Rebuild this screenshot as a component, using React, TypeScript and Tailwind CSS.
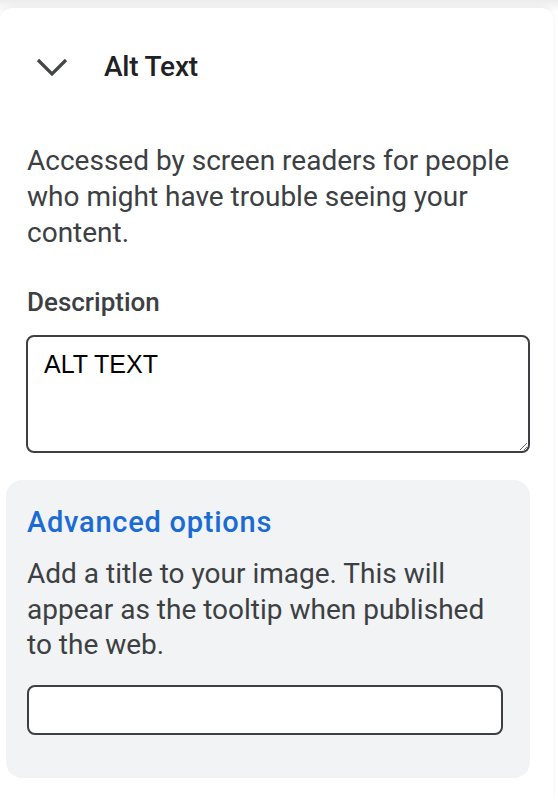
import React from 'react';

const Chevron: React.FC = () => (
  <svg width="32" height="18" viewBox="0 0 32 18" fill="none">
    <path d="M2 2 L16 16 L30 2" stroke="#444746" strokeWidth="3.2" strokeLinejoin="miter" />
  </svg>
);

const App: React.FC = () => {
  return (
    <div className="w-[558px] h-[800px] overflow-hidden bg-gradient-to-b from-[#ececec] to-white to-[12px] pt-2 font-['Roboto',sans-serif]">
      <div className="h-full mr-[5px] rounded-t-xl bg-white shadow-[0_-1px_6px_rgba(0,0,0,0.06)] pt-[41px]">
        {/* Header */}
        <div className="flex items-center h-[36px] pl-[36px]">
          <Chevron />
          <span className="ml-[36px] text-[28px] font-medium text-[#202124] tracking-[-0.2px]">Alt Text</span>
        </div>

        {/* Help text */}
        <p className="mt-[58px] px-[27px] text-[28px] leading-[36px] text-[#3c4043]">
          Accessed by screen readers for people who might have trouble seeing your content.
        </p>

        <div className="mt-[33px] px-[27px] text-[26px] leading-[36px] font-medium text-[#3c4043]">Description</div>

        <div className="mt-[15px] pl-[26px]">
          <textarea
            defaultValue="ALT TEXT"
            className="block w-[504px] h-[118px] border-2 border-[#3c4043] rounded-lg bg-white px-[16px] pt-[12px] text-[25px] leading-[30px] text-black font-['Liberation_Sans',sans-serif] outline-none"
          />
        </div>

        {/* Advanced options */}
        <div className="mt-[27px] ml-[6px] w-[524px] h-[298px] rounded-2xl bg-[#f1f3f4] pt-[24px] px-[21px]">
          <div className="text-[29px] leading-[36px] font-medium text-[#1a6bd6] tracking-[0.75px]">Advanced options</div>
          <p className="mt-[16px] text-[28px] leading-[35.5px] text-[#3c4043]">
            Add a title to your image. This will appear as the tooltip when published to the web.
          </p>
          <input
            type="text"
            className="block mt-[22px] w-[476px] h-[50px] border-2 border-[#3c4043] rounded-lg bg-white px-3 text-[20px] outline-none"
          />
        </div>
      </div>
    </div>
  );
};

export default App;
